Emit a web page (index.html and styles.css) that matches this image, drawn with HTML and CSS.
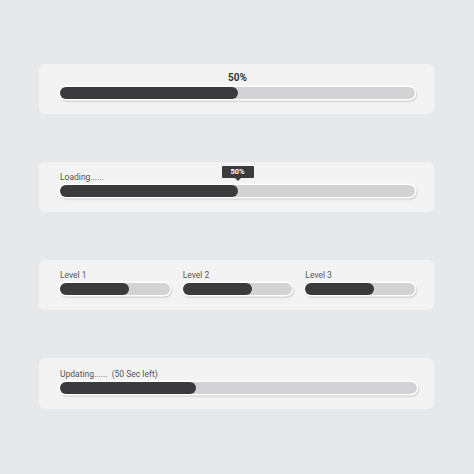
FILE: index.html
```html
<!DOCTYPE html>
<html lang="en">
  <head>
    <meta charset="UTF-8" />
    <meta name="viewport" content="width=device-width, initial-scale=1.0" />
    <title>Progress Bars</title>
    <link rel="stylesheet" href="styles.css">
  </head>
  <body>
    <div class="board">

      <!-- Centered percentage -->
      <div class="card card-center">
        <div class="title">50%</div>
        <div class="track"><div class="fill" style="width: 50%"></div></div>
      </div>

      <!-- Label with tooltip -->
      <div class="card card-tip">
        <div class="label">Loading......</div>
        <div class="track">
          <div class="fill" style="width: 50%"></div>
          <div class="tooltip" style="left: 50%">50%</div>
        </div>
      </div>

      <!-- Three levels -->
      <div class="card card-levels">
        <div class="level">
          <div class="label">Level 1</div>
          <div class="track"><div class="fill" style="width: 63%"></div></div>
        </div>
        <div class="level">
          <div class="label">Level 2</div>
          <div class="track"><div class="fill" style="width: 63%"></div></div>
        </div>
        <div class="level">
          <div class="label">Level 3</div>
          <div class="track"><div class="fill" style="width: 63%"></div></div>
        </div>
      </div>

      <!-- Time left -->
      <div class="card card-time">
        <div class="label">Updating...... &nbsp;(50 Sec left)</div>
        <div class="track"><div class="fill" style="width: 38%"></div></div>
      </div>

    </div>
  </body>
</html>
```

FILE: styles.css
```css
body {
  margin: 0;
  padding: 0;
  background: #e7e8ea;
  font-family: Roboto, "Liberation Sans", Arial, sans-serif;
  width: 474px;
  height: 474px;
  -webkit-font-smoothing: antialiased;
}

.board {
  display: flex;
  flex-direction: column;
  gap: 48px;
  padding: 64px 0 0 39px;
}

.card {
  width: 395px;
  box-sizing: border-box;
  background: #f3f3f4;
  border-radius: 6px;
  padding: 9px 19px 15px 21px;
  height: 50px;
}

.title {
  text-align: center;
  font-size: 10px;
  line-height: 12px;
  font-weight: bold;
  color: #333;
  margin-bottom: 3px;
}

.label {
  font-size: 8.5px;
  line-height: 11px;
  color: #555;
  margin-bottom: 2px;
}

/* Bar with a white rim and a soft drop shadow */
.track {
  position: relative;
  height: 12px;
  background: #d3d3d5;
  border-radius: 6px;
  box-shadow: 0 0 0 1.5px #fff, 1px 1.5px 2px 1px rgba(0, 0, 0, 0.18);
}

.fill {
  height: 100%;
  background: #3b3b3d;
  border-radius: 6px;
}

.card-center {
  padding-top: 8px;
}

.card-tip {
  padding-top: 10px;
}

.tooltip {
  position: absolute;
  bottom: 19px;
  transform: translateX(-50%);
  width: 32px;
  height: 12px;
  line-height: 12px;
  background: #3b3b3d;
  color: #fff;
  font-size: 7.5px;
  font-weight: bold;
  text-align: center;
  border-radius: 1px;
}

.tooltip::after {
  content: "";
  position: absolute;
  left: 50%;
  top: 100%;
  margin-left: -3px;
  border: 3px solid transparent;
  border-top-color: #3b3b3d;
}

.card-levels {
  display: flex;
  gap: 13px;
  padding-top: 10px;
}

.level {
  width: 110px;
}

.card-time {
  height: 51px;
  padding-top: 11px;
  padding-right: 17px;
}
```
